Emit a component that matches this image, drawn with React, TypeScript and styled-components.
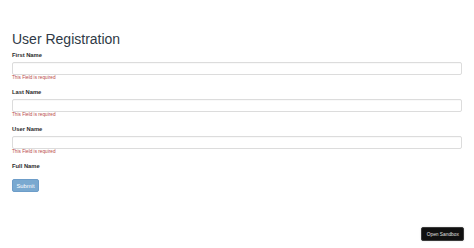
import React from "react";
import styled, { createGlobalStyle } from "styled-components";

const GlobalStyle = createGlobalStyle`
  html, body {
    margin: 0;
    padding: 0;
    background: #ffffff;
    font-family: "Liberation Sans", Arial, sans-serif;
  }
`;

const Page = styled.div`
  position: relative;
  width: 474px;
  height: 248px;
  box-sizing: border-box;
  padding: 31px 12px 0 12px;
`;

const Title = styled.h1`
  margin: 0 0 3.8px 0;
  font-size: 14px;
  line-height: 16px;
  font-weight: 400;
  color: #2f3a46;
`;

const Form = styled.form`
  display: flex;
  flex-direction: column;
`;

const Field = styled.div`
  display: flex;
  flex-direction: column;
  height: 37px;
`;

const Label = styled.label`
  font-size: 5.8px;
  line-height: 8px;
  font-weight: 700;
  color: #2b2b2b;
  margin-bottom: 3px;
`;

const Input = styled.input`
  box-sizing: border-box;
  width: 100%;
  height: 12.8px;
  margin: 0;
  padding: 0 3px;
  border: 0.6px solid #dcdcdc;
  border-radius: 2px;
  background: #ffffff;
  box-shadow: inset 0 0.5px 0.5px rgba(0, 0, 0, 0.05);
  outline: none;
  font-size: 5.6px;
`;

const ErrorText = styled.span`
  font-size: 4.7px;
  line-height: 6px;
  color: #b94a48;
`;

const SubmitButton = styled.button`
  align-self: flex-start;
  width: 27px;
  height: 13px;
  margin-top: 6.6px;
  padding: 0;
  border: 0.5px solid #6d9dc9;
  border-radius: 2px;
  background: #7aa9d0;
  color: #ffffff;
  font-family: "Liberation Sans", Arial, sans-serif;
  font-size: 5.8px;
  cursor: not-allowed;
`;

const SandboxButton = styled.button`
  position: absolute;
  right: 9.7px;
  bottom: 7.3px;
  width: 43px;
  height: 13.4px;
  padding: 0;
  border: 0.6px solid #3a3a3a;
  border-radius: 2px;
  background: #101010;
  color: #e0e0e0;
  font-family: "Liberation Sans", Arial, sans-serif;
  font-size: 4.8px;
  box-shadow: 0 0 2px rgba(0, 0, 0, 0.15);
`;

const fields = [
  { key: "firstName", title: "First Name" },
  { key: "lastName", title: "Last Name" },
  { key: "userName", title: "User Name" },
];

export default function App() {
  return (
    <>
      <GlobalStyle />
      <Page>
        <Title>User Registration</Title>
        <Form onSubmit={(e) => e.preventDefault()}>
          {fields.map(({ key, title }) => (
            <Field key={key}>
              <Label htmlFor={key}>{title}</Label>
              <Input id={key} type="text" />
              <ErrorText>This Field is required</ErrorText>
            </Field>
          ))}
          <Label>Full Name</Label>
          <SubmitButton type="submit" disabled>
            Submit
          </SubmitButton>
        </Form>
        <SandboxButton type="button">Open Sandbox</SandboxButton>
      </Page>
    </>
  );
}
